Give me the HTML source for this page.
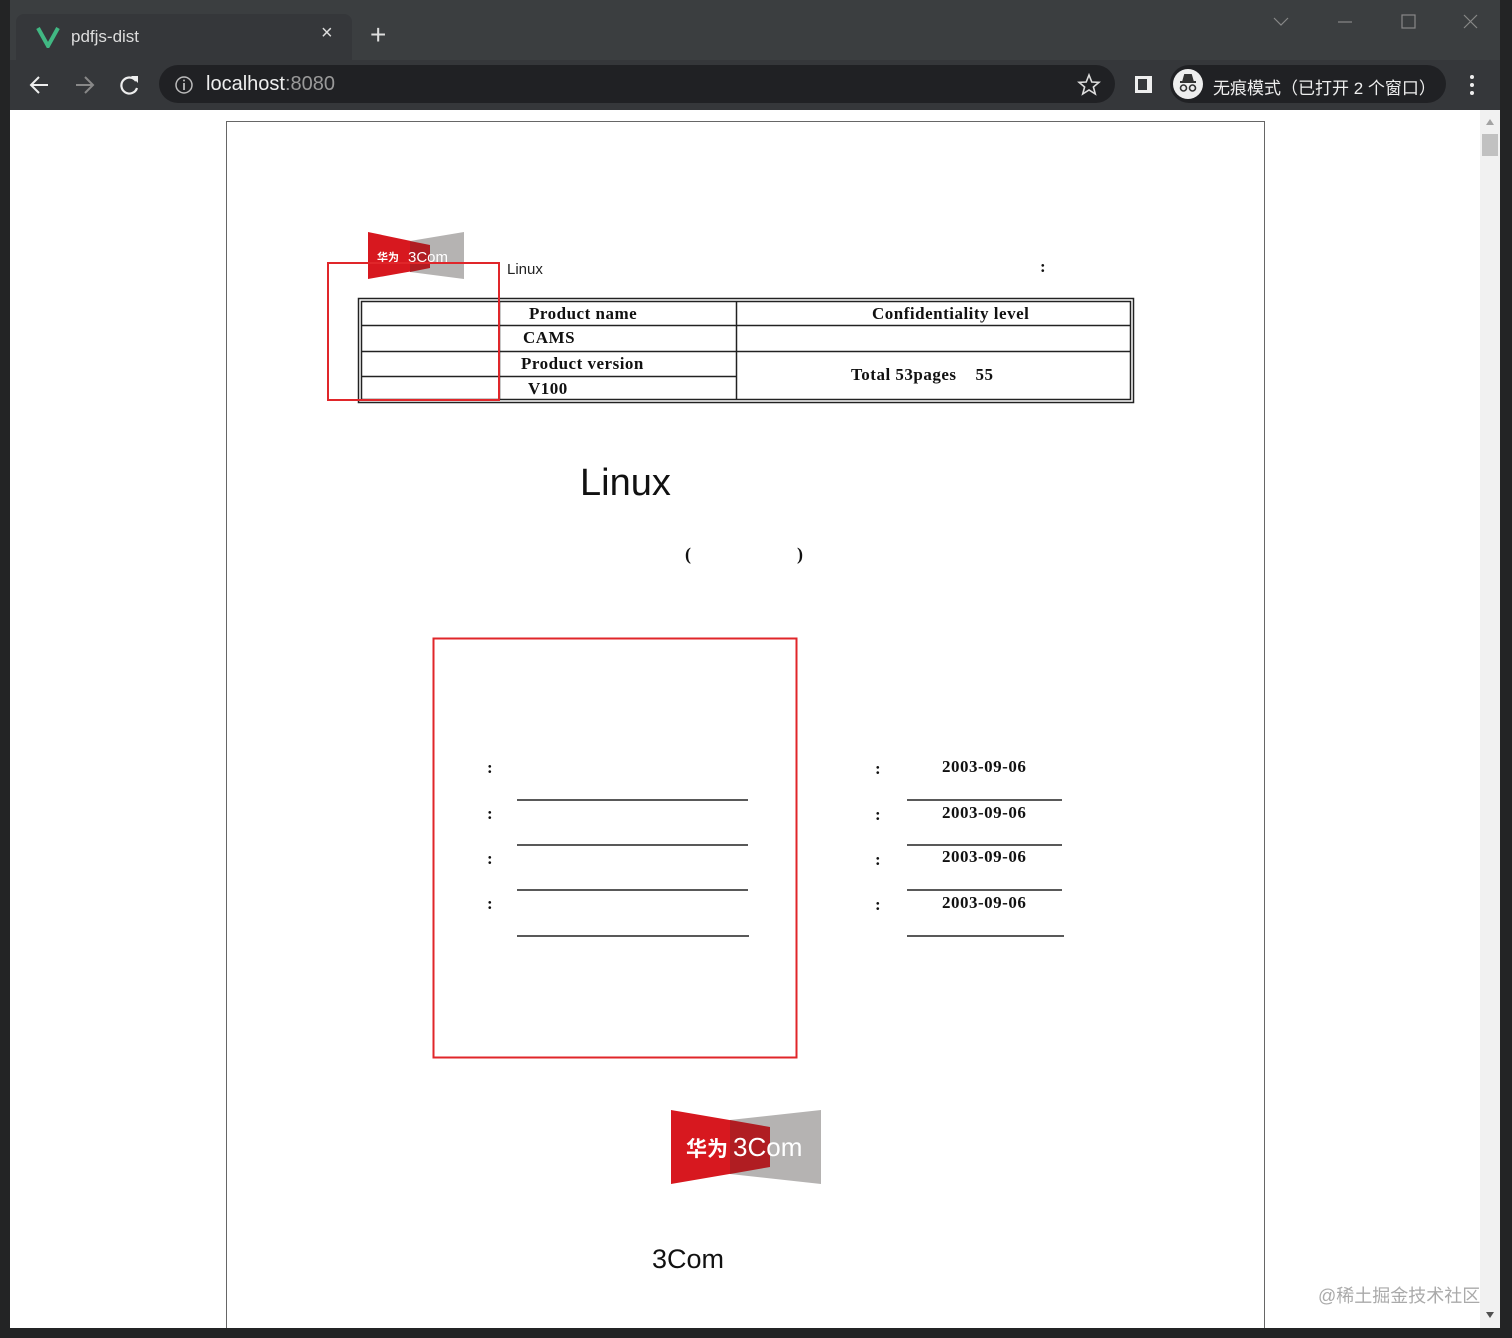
<!DOCTYPE html>
<html><head><meta charset="utf-8">
<style>
*{margin:0;padding:0;box-sizing:border-box}
html,body{width:1512px;height:1338px;overflow:hidden;background:#202124;font-family:"Liberation Sans","Noto Sans CJK SC",sans-serif}
.abs{position:absolute}
.serif{font-family:"Liberation Serif","Noto Serif CJK SC",serif;font-weight:bold;color:#111;font-size:17px;letter-spacing:0.5px;white-space:pre}
</style></head><body>
<div class="abs" style="left:0;top:0;width:1512px;height:1338px;background:#232425"></div>
<div class="abs" style="left:10px;top:0;width:1490px;height:60px;background:#3b3e40"></div>
<div class="abs" style="left:16px;top:14px;width:336px;height:48px;background:#35373a;border-radius:8px 8px 0 0"></div>
<svg class="abs" style="left:36px;top:26px" width="24" height="22"><path d="M2 2 L12 20 L22 2" fill="none" stroke="#41b883" stroke-width="4"/></svg>
<div class="abs" style="left:71px;top:27px;font-size:17px;color:#ddd">pdfjs-dist</div>
<div class="abs" style="left:321px;top:22px;font-size:20px;color:#ddd">×</div>
<div class="abs" style="left:370px;top:19px;font-size:28px;color:#ddd;font-weight:300">+</div>
<svg class="abs" style="left:1270px;top:12px" width="220" height="22">
<path d="M4 6 L11 13 L18 6" stroke="#888" fill="none" stroke-width="1.2"/>
<path d="M68 10 H82" stroke="#888" stroke-width="1.2"/>
<rect x="132" y="3" width="13" height="13" stroke="#888" fill="none" stroke-width="1.2"/>
<path d="M194 3 L207 16 M207 3 L194 16" stroke="#888" stroke-width="1.2"/>
</svg>
<div class="abs" style="left:10px;top:60px;width:1490px;height:50px;background:#35373a"></div>
<svg class="abs" style="left:28px;top:72px" width="120" height="26">
<path d="M20 13 H4 M11 5 L3 13 L11 21" stroke="#eee" stroke-width="2" fill="none"/>
<path d="M48 13 H64 M57 5 L65 13 L57 21" stroke="#888" stroke-width="2" fill="none"/>
<path d="M108 9 A8 8 0 1 0 109 16" stroke="#eee" stroke-width="2.2" fill="none"/><path d="M103 4 L110 4 L110 11 Z" fill="#eee"/>
</svg>
<div class="abs" style="left:159px;top:65px;width:956px;height:38px;background:#202124;border-radius:19px"></div>
<svg class="abs" style="left:174px;top:75px" width="20" height="20"><circle cx="10" cy="10" r="8" stroke="#bbb" stroke-width="1.5" fill="none"/><path d="M10 8 V15" stroke="#bbb" stroke-width="1.8"/><circle cx="10" cy="5.5" r="1" fill="#bbb"/></svg>
<div class="abs" style="left:206px;top:73px;font-size:20px;color:#eee">localhost<span style="color:#999">:8080</span></div>
<svg class="abs" style="left:1077px;top:73px" width="24" height="24"><path d="M12 2 L14.8 9 L22 9.3 L16.4 14 L18.3 21 L12 17 L5.7 21 L7.6 14 L2 9.3 L9.2 9 Z" fill="none" stroke="#ddd" stroke-width="1.6"/></svg>
<svg class="abs" style="left:1133px;top:74px" width="22" height="22"><rect x="2" y="2" width="17" height="17" fill="#eee"/><rect x="5" y="5" width="9" height="11" fill="#35373a"/></svg>
<div class="abs" style="left:1170px;top:65px;width:276px;height:38px;background:#202124;border-radius:19px"></div>
<svg class="abs" style="left:1172px;top:68px" width="32" height="32"><circle cx="16" cy="16" r="15" fill="#eee"/><path d="M8 14 H24 M11 14 L13 7 H19 L21 14" stroke="#333" stroke-width="2" fill="#333"/><circle cx="11.5" cy="20" r="3" stroke="#333" stroke-width="1.6" fill="none"/><circle cx="20.5" cy="20" r="3" stroke="#333" stroke-width="1.6" fill="none"/></svg>
<div class="abs" style="left:1213px;top:74px;font-size:17px;color:#eee;white-space:nowrap">无痕模式（已打开 2 个窗口）</div>
<svg class="abs" style="left:1466px;top:74px" width="12" height="22"><circle cx="6" cy="3" r="2" fill="#eee"/><circle cx="6" cy="11" r="2" fill="#eee"/><circle cx="6" cy="19" r="2" fill="#eee"/></svg>
<div class="abs" style="left:10px;top:110px;width:1490px;height:1218px;background:#fff"></div>
<div class="abs" style="left:1480px;top:110px;width:20px;height:1218px;background:#f1f1f1"></div>
<svg class="abs" style="left:1480px;top:110px" width="20" height="1218"><path d="M6 15 L14 15 L10 9 Z" fill="#a3a3a3"/><rect x="2" y="24" width="16" height="22" fill="#c1c1c1"/><path d="M6 1202 L14 1202 L10 1208 Z" fill="#505050"/></svg>
<div class="abs" style="left:226px;top:121px;width:1039px;height:1212px;border:1px solid #666;border-bottom:none;background:#fff"></div>
<svg class="abs" style="left:0;top:0" width="1512" height="1338">
<polygon points="368,232 430,245 430,268 368,279" fill="#d7181f"/>
<polygon points="410,241 464,232 464,279 410,272" fill="#b5b3b2"/>
<polygon points="410,241 430,245 430,268 410,272" fill="#b01d22"/>
<text x="377" y="261" font-size="11" fill="#fff" font-family="Noto Sans CJK SC,sans-serif" font-weight="bold">华为</text>
<text x="408" y="262" font-size="15" fill="#fff" font-family="Liberation Sans,sans-serif">3Com</text>
<polygon points="671,1110 770,1127 770,1167 671,1184" fill="#d7181f"/>
<polygon points="730,1120 821,1110 821,1184 730,1174" fill="#b5b3b2"/>
<polygon points="730,1120 770,1127 770,1167 730,1174" fill="#b01d22"/>
<text x="686" y="1156" font-size="21" fill="#fff" font-family="Noto Sans CJK SC,sans-serif" font-weight="bold">华为</text>
<text x="733" y="1156" font-size="26" fill="#fff" font-family="Liberation Sans,sans-serif">3Com</text>
<g stroke="#222" fill="none">
<rect x="358.5" y="298.5" width="775" height="104" stroke-width="1.5"/>
<rect x="361.5" y="301.5" width="769" height="98" stroke-width="1.5"/>
<path d="M499.5 301 V399 M736.5 301 V399 M361 325.5 H1130 M361 351.5 H1130 M361 376.5 H736" stroke-width="1.5"/>
</g>
<g stroke="#222" stroke-width="1.5">
<path d="M517 800 H748 M517 845 H748 M517 890 H748 M517 936 H749"/>
<path d="M907 800 H1062 M907 845 H1062 M907 890 H1062 M907 936 H1064"/>
</g>
<rect x="328" y="263" width="171" height="137" stroke="#e0262a" stroke-width="2" fill="none"/>
<rect x="433.5" y="638.5" width="363" height="419" stroke="#e0262a" stroke-width="2" fill="none"/>
</svg>
<div class="abs" style="left:507px;top:261px;font-size:15px;color:#222">Linux</div>
<div class="abs serif" style="left:1040px;top:257px">:</div>
<div class="abs serif" style="left:529px;top:304px">Product name</div>
<div class="abs serif" style="left:523px;top:328px">CAMS</div>
<div class="abs serif" style="left:521px;top:354px">Product version</div>
<div class="abs serif" style="left:528px;top:379px">V100</div>
<div class="abs serif" style="left:872px;top:304px">Confidentiality level</div>
<div class="abs serif" style="left:851px;top:365px">Total 53pages    55</div>
<div class="abs" style="left:580px;top:462px;font-size:38px;color:#111">Linux</div>
<div class="abs serif" style="left:685px;top:544px;font-size:18px">(</div>
<div class="abs serif" style="left:797px;top:544px;font-size:18px">)</div>
<div class="abs serif" style="left:487px;top:758px">:</div>
<div class="abs serif" style="left:487px;top:804px">:</div>
<div class="abs serif" style="left:487px;top:849px">:</div>
<div class="abs serif" style="left:487px;top:894px">:</div>
<div class="abs serif" style="left:875px;top:759px">:</div>
<div class="abs serif" style="left:875px;top:805px">:</div>
<div class="abs serif" style="left:875px;top:850px">:</div>
<div class="abs serif" style="left:875px;top:895px">:</div>
<div class="abs serif" style="left:942px;top:757px">2003-09-06</div>
<div class="abs serif" style="left:942px;top:803px">2003-09-06</div>
<div class="abs serif" style="left:942px;top:847px">2003-09-06</div>
<div class="abs serif" style="left:942px;top:893px">2003-09-06</div>
<div class="abs" style="left:652px;top:1244px;font-size:27px;color:#111">3Com</div>
<div class="abs" style="left:1318px;top:1282px;font-size:18px;color:#aaa;white-space:nowrap">@稀土掘金技术社区</div>
<div class="abs" style="left:0;top:1328px;width:1512px;height:10px;background:#232425;z-index:5"></div>
</body></html>
